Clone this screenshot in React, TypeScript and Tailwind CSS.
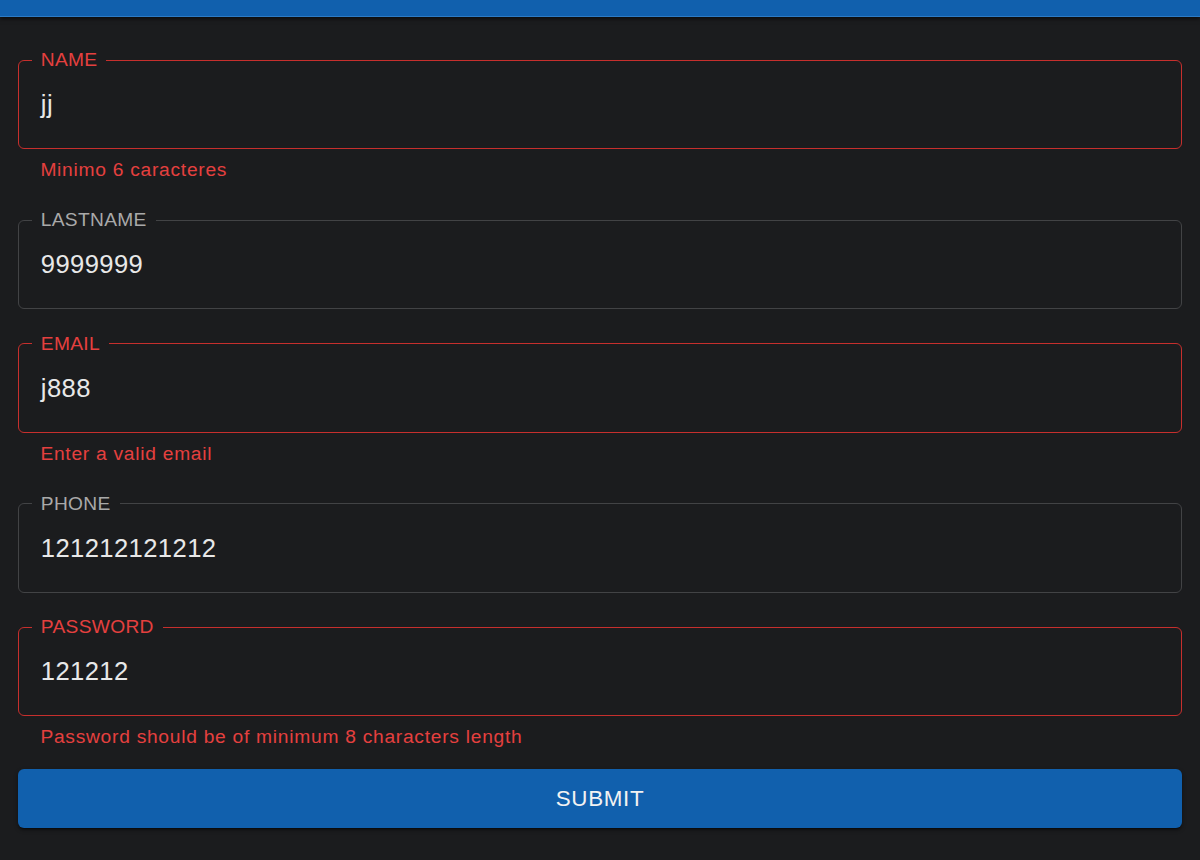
import React from "react";

type Field = { label: string; value: string; error?: string };

const fields: Field[] = [
  { label: "NAME", value: "jj", error: "Minimo 6 caracteres" },
  { label: "LASTNAME", value: "9999999" },
  { label: "EMAIL", value: "j888", error: "Enter a valid email" },
  { label: "PHONE", value: "121212121212" },
  { label: "PASSWORD", value: "121212", error: "Password should be of minimum 8 characters length" },
];

function TextField({ f, last }: { f: Field; last: boolean }) {
  const err = !!f.error;
  return (
    <div className={last ? "mb-[16px]" : "mb-[24.5px]"}>
      <fieldset
        className={
          "m-0 min-w-0 rounded-[6px] border-[1.6px] border-solid px-[12.8px] pb-[25px] pt-0 " +
          (err ? "border-[#c62f2d]" : "border-[#424345]")
        }
      >
        <legend
          className={
            "pl-[9px] pr-[9px] text-[19.2px] leading-[20px] tracking-[0.3px] " +
            (err ? "text-[#e5403f]" : "text-[#a9a9a9]")
          }
        >
          {f.label}
        </legend>
        <div className="pl-[9px] pt-[16px] text-[25.6px] leading-[37px] tracking-[0.4px] text-[#e8e8e8]">
          {f.value}
        </div>
      </fieldset>
      {err && (
        <div className="ml-[22.4px] mt-[4.8px] text-[19.2px] leading-[31.9px] tracking-[0.74px] text-[#e5403f]">
          {f.error}
        </div>
      )}
    </div>
  );
}

export default function App() {
  return (
    <div
      className="min-h-[860px] bg-[#1b1c1e]"
      style={{ fontFamily: '"Liberation Sans", Arial, sans-serif' }}
    >
      <div className="h-[17px] border-b border-[#2d7bc4] bg-[#1160ad] shadow-[0_2px_4px_rgba(0,0,0,0.6)]" />
      <form className="px-[18px] pt-[33px]" onSubmit={(e) => e.preventDefault()}>
        {fields.map((f, i) => (
          <TextField key={f.label} f={f} last={i === fields.length - 1} />
        ))}
        <button
          type="submit"
          className="flex h-[59px] w-full items-center justify-center rounded-[6px] bg-[#1160ad] text-[22.4px] tracking-[0.64px] text-[#f2f2f2] shadow-[0_3px_2px_-2px_rgba(0,0,0,0.5),0_2px_4px_rgba(0,0,0,0.4)]"
        >
          SUBMIT
        </button>
      </form>
    </div>
  );
}
